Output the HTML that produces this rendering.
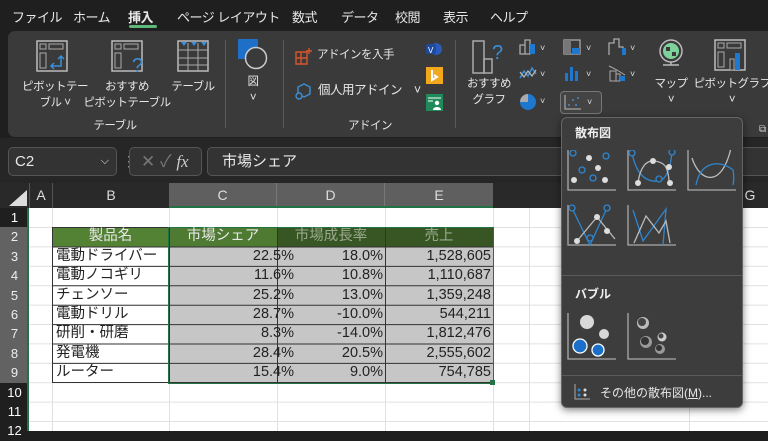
<!DOCTYPE html>
<html><head><meta charset="utf-8">
<style>
*{margin:0;padding:0;box-sizing:border-box}
body{width:768px;height:431px;overflow:hidden;background:#1f1f1f;font-family:"Liberation Sans","Noto Sans CJK JP",sans-serif;color:#fff;position:relative}
.a{position:absolute}
.tab{position:absolute;top:7px;font-size:13px;color:#e8e8e8;white-space:nowrap;letter-spacing:-0.5px}
.rb{position:absolute;left:8px;top:31px;width:770px;height:106px;background:#3a3a3a;border-radius:7px}
.lbl{position:absolute;font-size:11.5px;color:#e6e6e6;text-align:center;line-height:16px;white-space:nowrap;letter-spacing:-0.5px}
.sep{position:absolute;top:40px;width:1px;height:88px;background:#5a5a5a}
.cell{position:absolute;font-size:14.5px;color:#222;line-height:19px;white-space:nowrap}
.rh{position:absolute;left:0;width:29px;height:19.4px;font-size:13px;text-align:center;line-height:19px}
.ch{position:absolute;top:183px;height:25px;font-size:14px;text-align:center;line-height:25px;color:#ddd}
.chev{font-size:9px;color:#ddd}
</style></head><body>
<!-- tabs -->
<div class="tab" style="left:12px">ファイル</div>
<div class="tab" style="left:73px">ホーム</div>
<div class="tab" style="left:128px;font-weight:bold">挿入</div>
<div class="a" style="left:129px;top:25px;width:28px;height:3px;background:#5cb97b;border-radius:2px"></div>
<div class="tab" style="left:177px">ページ レイアウト</div>
<div class="tab" style="left:292px">数式</div>
<div class="tab" style="left:341px">データ</div>
<div class="tab" style="left:395px">校閲</div>
<div class="tab" style="left:443px">表示</div>
<div class="tab" style="left:490px">ヘルプ</div>

<div class="rb"></div>
<!-- table group -->
<svg class="a" style="left:36px;top:40px" width="32" height="32"><rect x="1" y="1" width="30" height="30" fill="none" stroke="#bbb" stroke-width="1.5"/><rect x="4" y="4" width="6" height="5" fill="none" stroke="#aaa"/><rect x="13" y="4" width="14" height="5" fill="none" stroke="#aaa"/><rect x="4" y="13" width="6" height="15" fill="none" stroke="#aaa"/><path d="M15 26h10v-10M22 19l3-3 3 3M18 23l-3 3 3 3" stroke="#3a8fd8" fill="none" stroke-width="1.5"/></svg>
<div class="lbl" style="left:17px;top:79px;width:76px">ピボットテー<br>ブル ˅</div>
<svg class="a" style="left:111px;top:40px" width="36" height="34"><rect x="1" y="1" width="30" height="30" fill="none" stroke="#bbb" stroke-width="1.5"/><rect x="4" y="4" width="6" height="5" fill="none" stroke="#aaa"/><rect x="13" y="4" width="14" height="5" fill="none" stroke="#aaa"/><rect x="4" y="13" width="6" height="15" fill="none" stroke="#aaa"/><text x="21" y="32" fill="#3a8fd8" font-size="20" font-family="Liberation Sans">?</text></svg>
<div class="lbl" style="left:82px;top:79px;width:90px">おすすめ<br>ピボットテーブル</div>
<svg class="a" style="left:177px;top:40px" width="32" height="32"><rect x="1" y="1" width="30" height="30" fill="none" stroke="#bbb" stroke-width="1.5"/><path d="M1 10h30M1 18h30M1 25h30M11 3v28M21 3v28" stroke="#aaa"/><path d="M4 2l3 4 3-4zM14 2l3 4 3-4zM24 2l3 4 3-4z" fill="#3a8fd8"/></svg>
<div class="lbl" style="left:168px;top:79px;width:50px">テーブル</div>
<div class="lbl" style="left:60px;top:118px;width:110px">テーブル</div>
<div class="sep" style="left:225px"></div>
<svg class="a" style="left:236px;top:38px" width="34" height="32"><rect x="2" y="1" width="20" height="20" fill="#1e6fc8"/><circle cx="20" cy="20" r="10.5" fill="#3a3a3a" stroke="#ccc" stroke-width="1.5"/></svg>
<div class="lbl" style="left:240px;top:74px;width:26px">図<br>˅</div>
<div class="sep" style="left:283px"></div>
<svg class="a" style="left:295px;top:47px" width="18" height="18"><path d="M1 5h11v12H1zM1 11h11M6 5v12M14 1v6M11 4h6" stroke="#d6542c" fill="none" stroke-width="1.4"/></svg>
<div class="lbl" style="left:317px;top:47px">アドインを入手</div>
<svg class="a" style="left:295px;top:82px" width="20" height="18"><path d="M9 2l6 3v7l-6 3-6-3V5z" stroke="#3a8fd8" fill="none" stroke-width="1.4"/><circle cx="4" cy="14" r="3" fill="#3a3a3a" stroke="#3a8fd8" stroke-width="1.4"/></svg>
<div class="lbl" style="left:318px;top:82px;font-size:12.5px">個人用アドイン&nbsp;&nbsp;&nbsp;&nbsp;˅</div>
<svg class="a" style="left:425px;top:41px" width="18" height="16"><circle cx="11" cy="8" r="6" fill="#2a5bb8"/><rect x="1" y="3" width="10" height="10" rx="2" fill="#1e4aa0"/><text x="3" y="12" font-size="8" fill="#fff" font-family="Liberation Sans">V</text></svg>
<svg class="a" style="left:426px;top:67px" width="17" height="17"><rect width="17" height="17" fill="#f2a81d"/><path d="M6 3v10l5-3-3-2" stroke="#fff" fill="none" stroke-width="2"/></svg>
<svg class="a" style="left:426px;top:94px" width="17" height="17"><rect width="17" height="17" fill="#1f8a5a"/><path d="M2 4h13M2 7h5" stroke="#fff"/><circle cx="11" cy="9" r="2.2" fill="#fff"/><path d="M7 16c0-4 8-4 8 0z" fill="#fff"/></svg>
<div class="lbl" style="left:348px;top:118px">アドイン</div>
<div class="sep" style="left:455px"></div>
<!-- charts -->
<svg class="a" style="left:472px;top:39px" width="36" height="36"><rect x="1" y="2" width="11" height="32" fill="none" stroke="#aaa" stroke-width="1.5"/><rect x="12" y="20" width="8" height="14" fill="none" stroke="#aaa" stroke-width="1.5"/><text x="20" y="20" font-size="20" fill="#3a8fd8" font-family="Liberation Sans">?</text></svg>
<div class="lbl" style="left:462px;top:76px;width:54px">おすすめ<br>グラフ</div>
<svg class="a" style="left:519px;top:39px" width="18" height="16"><path d="M1 6h5v9H1zM6 1h5v14H6z" fill="none" stroke="#aaa" stroke-width="1.3"/><rect x="11" y="5" width="5" height="10" fill="#1e78d0"/></svg><span class="a chev" style="left:540px;top:43px">˅</span>
<svg class="a" style="left:519px;top:66px" width="18" height="14"><path d="M1 12l4-7 4 5 4-8 4 6" stroke="#3a8fd8" fill="none" stroke-width="1.5"/><path d="M1 6l4 5 4-6 4 5 4-6" stroke="#bbb" fill="none" stroke-width="1.2"/></svg><span class="a chev" style="left:540px;top:69px">˅</span>
<svg class="a" style="left:519px;top:93px" width="18" height="18"><circle cx="9" cy="9" r="8" fill="#1e78d0"/><path d="M9 9V1a8 8 0 0 0-8 8z" fill="#aaa"/></svg><span class="a chev" style="left:540px;top:96px">˅</span>
<svg class="a" style="left:563px;top:39px" width="18" height="16"><rect x="1" y="1" width="16" height="14" fill="none" stroke="#aaa" stroke-width="1.3"/><rect x="1" y="1" width="7" height="14" fill="#777"/><rect x="9" y="9" width="8" height="6" fill="#1e78d0"/></svg><span class="a chev" style="left:586px;top:43px">˅</span>
<svg class="a" style="left:563px;top:64px" width="18" height="18"><path d="M2 17V9h3v8M7 17V3h3v14M12 17V7h3v10" fill="#1e78d0"/></svg><span class="a chev" style="left:586px;top:69px">˅</span>
<svg class="a" style="left:608px;top:38px" width="20" height="18"><path d="M1 17V5h5V1h5v8h4v8" fill="none" stroke="#aaa" stroke-width="1.3"/><rect x="14" y="10" width="4" height="7" fill="#1e78d0"/></svg><span class="a chev" style="left:630px;top:43px">˅</span>
<svg class="a" style="left:608px;top:64px" width="20" height="18"><path d="M1 2l8 4 8 5" stroke="#aaa" fill="none"/><rect x="2" y="7" width="6" height="10" fill="none" stroke="#aaa"/><rect x="8" y="10" width="4" height="7" fill="none" stroke="#aaa"/><rect x="12" y="12" width="5" height="5" fill="#1e78d0"/></svg><span class="a chev" style="left:630px;top:69px">˅</span>
<div class="a" style="left:560px;top:91px;width:42px;height:23px;border:1px solid #777;border-radius:4px;background:#444"></div>
<svg class="a" style="left:564px;top:94px" width="18" height="16"><path d="M1 1v14h16" stroke="#bbb" fill="none"/><circle cx="5" cy="11" r="1" fill="#3a8fd8"/><circle cx="9" cy="6" r="1" fill="#3a8fd8"/><circle cx="12" cy="11" r="1" fill="#3a8fd8"/><circle cx="14" cy="4" r="1" fill="#3a8fd8"/></svg><span class="a chev" style="left:587px;top:97px">˅</span>
<svg class="a" style="left:657px;top:38px" width="28" height="32"><circle cx="14" cy="13" r="11" fill="none" stroke="#bbb" stroke-width="1.5"/><circle cx="14" cy="13" r="8" fill="#7ed39a"/><path d="M9 9h4v4H9zM15 14h4v4h-4z" fill="#3a3a3a"/><path d="M6 27h16M14 24v3" stroke="#bbb" stroke-width="1.5"/></svg>
<div class="lbl" style="left:651px;top:76px;width:40px">マップ<br>˅</div>
<svg class="a" style="left:714px;top:39px" width="34" height="34"><rect x="1" y="1" width="30" height="30" fill="none" stroke="#bbb" stroke-width="1.5"/><rect x="4" y="4" width="6" height="5" fill="none" stroke="#aaa"/><rect x="13" y="4" width="14" height="5" fill="none" stroke="#aaa"/><rect x="4" y="13" width="6" height="15" fill="none" stroke="#aaa"/><rect x="16" y="20" width="4" height="11" fill="#3a3a3a" stroke="#aaa"/><rect x="21" y="14" width="5" height="17" fill="#1e78d0"/></svg>
<div class="lbl" style="left:692px;top:76px;width:80px">ピボットグラフ<br>˅</div>
<div class="a" style="left:759px;top:124px;font-size:10px;color:#ccc">⧉</div>

<!-- formula bar -->
<div class="a" style="left:0;top:138px;width:768px;height:45px;background:#262626"></div>
<div class="a" style="left:8px;top:147px;width:109px;height:29px;border:1px solid #555;border-radius:5px;background:#333;font-size:15px;line-height:27px;padding-left:6px;color:#e8e8e8">C2<span style="position:absolute;right:7px;font-size:11px">&#x2335;</span></div>
<div class="a" style="left:122px;top:153px;font-size:14px;color:#bbb">⋮</div>
<div class="a" style="left:129px;top:147px;width:73px;height:29px;border:1px solid #555;border-radius:5px;background:#333;font-size:17px;line-height:27px;padding-left:11px;color:#777">✕&nbsp;✓&nbsp;<i style="font-family:'Liberation Serif',serif;color:#ccc">fx</i></div>
<div class="a" style="left:207px;top:147px;width:570px;height:29px;border:1px solid #555;border-radius:5px;background:#333;font-size:15px;line-height:27px;padding-left:14px;color:#e8e8e8">市場シェア</div>

<!-- column headers -->
<div class="a" style="left:0;top:183px;width:768px;height:25px;background:#292929"></div>
<svg class="a" style="left:8px;top:189px" width="20" height="18"><path d="M19 1v16H1z" fill="#ddd"/></svg>
<div class="ch" style="left:29px;width:23px;border-left:1px solid #555">A</div>
<div class="ch" style="left:52px;width:117px;border-left:1px solid #555">B</div>
<div class="ch" style="left:169px;width:324px;background:#5f5f5f"></div>
<div class="ch" style="left:169px;width:108px;border-right:1px solid #777">C</div>
<div class="ch" style="left:277px;width:108px;border-right:1px solid #777">D</div>
<div class="ch" style="left:385px;width:108px">E</div>
<div class="ch" style="left:740px;width:20px">G</div>
<div class="a" style="left:169px;top:206px;width:324px;height:2px;background:#217346"></div>

<!-- grid -->
<div class="a" style="left:29px;top:208px;width:739px;height:223px;background:#fff"></div>
<svg class="a" style="left:29px;top:208px" width="739" height="223">
<g stroke="#e1e1e1" stroke-width="1">
<path d="M23.5 0v223M140.5 0v223M248.5 0v223M356.5 0v223M464.5 0v223M500.5 0v223M660.5 0v223"/>
<path d="M0 19.5h739M0 38.9h739M0 58.3h739M0 77.7h739M0 97.1h739M0 116.5h739M0 135.9h739M0 155.3h739M0 174.7h739M0 194.1h739M0 213.5h739"/>
</g></svg>
<!-- row headers -->
<div class="a" style="left:0;top:208px;width:29px;height:223px;background:#1f1f1f"></div>
<div class="a" style="left:0;top:227.4px;width:29px;height:155.2px;background:#626262"></div>
<div class="a" style="left:27px;top:208px;width:2px;height:223px;background:#217346"></div>
<div class="rh" style="top:208px;color:#fff">1</div>
<div class="rh" style="top:227.4px;color:#eee">2</div>
<div class="rh" style="top:246.8px;color:#eee">3</div>
<div class="rh" style="top:266.2px;color:#eee">4</div>
<div class="rh" style="top:285.6px;color:#eee">5</div>
<div class="rh" style="top:305px;color:#eee">6</div>
<div class="rh" style="top:324.4px;color:#eee">7</div>
<div class="rh" style="top:343.8px;color:#eee">8</div>
<div class="rh" style="top:363.2px;color:#eee">9</div>
<div class="rh" style="top:382.6px;color:#fff">10</div>
<div class="rh" style="top:402px;color:#fff">11</div>
<div class="rh" style="top:421.4px;color:#fff">12</div>

<!-- table -->
<div class="a" style="left:52px;top:227.4px;width:117px;height:19.4px;background:#548235"></div>
<div class="a" style="left:169px;top:227.4px;width:108px;height:19.4px;background:#4e7a31"></div>
<div class="a" style="left:277px;top:227.4px;width:216px;height:19.4px;background:#375623"></div>
<div class="a" style="left:169px;top:246.8px;width:324px;height:135.8px;background:#c6c6c6"></div>
<svg class="a" style="left:52px;top:227px" width="442" height="157"><g stroke="#333" stroke-width="1" fill="none">
<path d="M0.5 0v156M117.5 0v156M225.5 0v156M333.5 0v156M441.5 0v156"/>
<path d="M0 0.5h442M0 20h442M0 39.4h442M0 58.8h442M0 78.2h442M0 97.6h442M0 117h442M0 136.4h442M0 155.5h442"/></g></svg>
<div class="a" style="left:168px;top:226.5px;width:326px;height:157px;border:1.5px solid #217346"></div>
<div class="a" style="left:490px;top:380px;width:5px;height:5px;background:#217346"></div>
<div class="cell" style="left:52px;top:227.4px;width:117px;text-align:center;color:#e8e8e8">製品名</div>
<div class="cell" style="left:169px;top:227.4px;width:108px;text-align:center;color:#e8e8e8">市場シェア</div>
<div class="cell" style="left:277px;top:227.4px;width:108px;text-align:center;color:#9aa98e">市場成長率</div>
<div class="cell" style="left:385px;top:227.4px;width:108px;text-align:center;color:#9aa98e">売上</div>

<div class="cell" style="left:56px;top:246.8px">電動ドライバー</div>
<div class="cell" style="left:56px;top:266.2px">電動ノコギリ</div>
<div class="cell" style="left:56px;top:285.6px">チェンソー</div>
<div class="cell" style="left:56px;top:305px">電動ドリル</div>
<div class="cell" style="left:56px;top:324.4px">研削・研磨</div>
<div class="cell" style="left:56px;top:343.8px">発電機</div>
<div class="cell" style="left:56px;top:363.2px">ルーター</div>

<div class="cell" style="right:474px;top:246.8px">22.5%</div><div class="cell" style="right:385px;top:246.8px">18.0%</div><div class="cell" style="right:277px;top:246.8px">1,528,605</div>
<div class="cell" style="right:474px;top:266.2px">11.6%</div><div class="cell" style="right:385px;top:266.2px">10.8%</div><div class="cell" style="right:277px;top:266.2px">1,110,687</div>
<div class="cell" style="right:474px;top:285.6px">25.2%</div><div class="cell" style="right:385px;top:285.6px">13.0%</div><div class="cell" style="right:277px;top:285.6px">1,359,248</div>
<div class="cell" style="right:474px;top:305px">28.7%</div><div class="cell" style="right:385px;top:305px">-10.0%</div><div class="cell" style="right:277px;top:305px">544,211</div>
<div class="cell" style="right:474px;top:324.4px">8.3%</div><div class="cell" style="right:385px;top:324.4px">-14.0%</div><div class="cell" style="right:277px;top:324.4px">1,812,476</div>
<div class="cell" style="right:474px;top:343.8px">28.4%</div><div class="cell" style="right:385px;top:343.8px">20.5%</div><div class="cell" style="right:277px;top:343.8px">2,555,602</div>
<div class="cell" style="right:474px;top:363.2px">15.4%</div><div class="cell" style="right:385px;top:363.2px">9.0%</div><div class="cell" style="right:277px;top:363.2px">754,785</div>

<!-- popup -->
<div class="a" style="left:561px;top:117px;width:182px;height:291px;background:#3d3d3d;border:1px solid #666;border-radius:6px;box-shadow:0 2px 8px rgba(0,0,0,.5)"></div>
<div class="a" style="left:575px;top:124px;font-size:12px;font-weight:bold;color:#eee">散布図</div>
<svg class="a" style="left:565px;top:150px" width="175" height="105" fill="none" stroke-width="1.3">
<g stroke="#aaa"><path d="M3 0v40h48M63 0v40h48M123 0v40h48M3 55v40h48M63 55v40h48"/></g>
<g stroke="#2e86d0"><circle cx="8" cy="3" r="3"/><circle cx="41" cy="6" r="3"/><circle cx="17" cy="20" r="3"/><circle cx="28" cy="28" r="3"/></g>
<g fill="#ddd"><circle cx="24" cy="8" r="3"/><circle cx="33" cy="18" r="3"/><circle cx="9" cy="30" r="3"/><circle cx="40" cy="30" r="3"/></g>
<path d="M67 3c3 15 10 30 27 28 8-2 12-15 13-30" stroke="#2e86d0"/><circle cx="67" cy="3" r="3" stroke="#2e86d0" fill="#3d3d3d"/><circle cx="107" cy="2" r="3" stroke="#2e86d0" fill="#3d3d3d"/><circle cx="94" cy="29" r="3" stroke="#2e86d0" fill="#3d3d3d"/>
<path d="M73 33c2-15 8-23 16-22 10 1 14 5 15 20" stroke="#bbb"/><circle cx="88" cy="11" r="3" fill="#ddd"/><circle cx="104" cy="17" r="3" fill="#ddd"/><circle cx="73" cy="33" r="3" fill="#ddd"/><circle cx="105" cy="33" r="3" fill="#ddd"/>
<path d="M127 8c8 25 30 30 39-10" stroke="#bbb"/><path d="M131 35c5-25 25-25 37-15 1 5 1 10 0 15" stroke="#2e86d0"/>
<path d="M7 58l18 37 17-37" stroke="#2e86d0"/><circle cx="7" cy="58" r="3" stroke="#2e86d0" fill="#3d3d3d"/><circle cx="42" cy="58" r="3" stroke="#2e86d0" fill="#3d3d3d"/><circle cx="25" cy="88" r="3" stroke="#2e86d0" fill="#3d3d3d"/>
<path d="M12 91l20-24 18 22" stroke="#bbb"/><circle cx="12" cy="91" r="3" fill="#ddd"/><circle cx="32" cy="67" r="3" fill="#ddd"/><circle cx="42" cy="81" r="3" fill="#ddd"/>
<path d="M68 60l10 31 23-32-3 36" stroke="#2e86d0"/><path d="M69 93l12-27 13 17 7-12 4 22" stroke="#bbb"/>
</g></svg>
<div class="a" style="left:562px;top:275px;width:180px;height:1px;background:#5a5a5a"></div>
<div class="a" style="left:575px;top:285px;font-size:12px;font-weight:bold;color:#eee">バブル</div>
<svg class="a" style="left:565px;top:313px" width="120" height="50">
<path d="M3 0v46h48M63 0v46h48" stroke="#aaa" stroke-width="1.3" fill="none"/>
<circle cx="22" cy="9" r="7" fill="#d8d8d8"/><circle cx="39" cy="21" r="5" fill="#d8d8d8"/><circle cx="15" cy="33" r="7" stroke="#fff" fill="#1a6fc8" stroke-width="1.3"/><circle cx="33" cy="37" r="6" stroke="#fff" fill="#1a6fc8" stroke-width="1.3"/>
<circle cx="78" cy="10" r="6" fill="#bbb"/><circle cx="77" cy="9" r="4" fill="#444"/><circle cx="97" cy="24" r="4.5" fill="#ccc"/><circle cx="96" cy="23" r="2.5" fill="#444"/><circle cx="81" cy="29" r="6" fill="#999"/><circle cx="80" cy="28" r="4" fill="#333"/><circle cx="95" cy="36" r="5" fill="#999"/><circle cx="94" cy="35" r="3" fill="#333"/>
</svg>
<div class="a" style="left:562px;top:375px;width:180px;height:1px;background:#5a5a5a"></div>
<svg class="a" style="left:574px;top:384px" width="16" height="16"><path d="M1 0v15h15" stroke="#aaa" fill="none"/><circle cx="5" cy="11" r="1.5" fill="#2e86d0"/><circle cx="5" cy="6" r="1.5" fill="#2e86d0"/><circle cx="11" cy="6" r="1.5" fill="#ddd"/><circle cx="11" cy="11" r="1.5" fill="#ddd"/></svg>
<div class="a" style="left:600px;top:384px;font-size:12px;color:#e6e6e6">その他の散布図(<u>M</u>)...</div>
</body></html>
